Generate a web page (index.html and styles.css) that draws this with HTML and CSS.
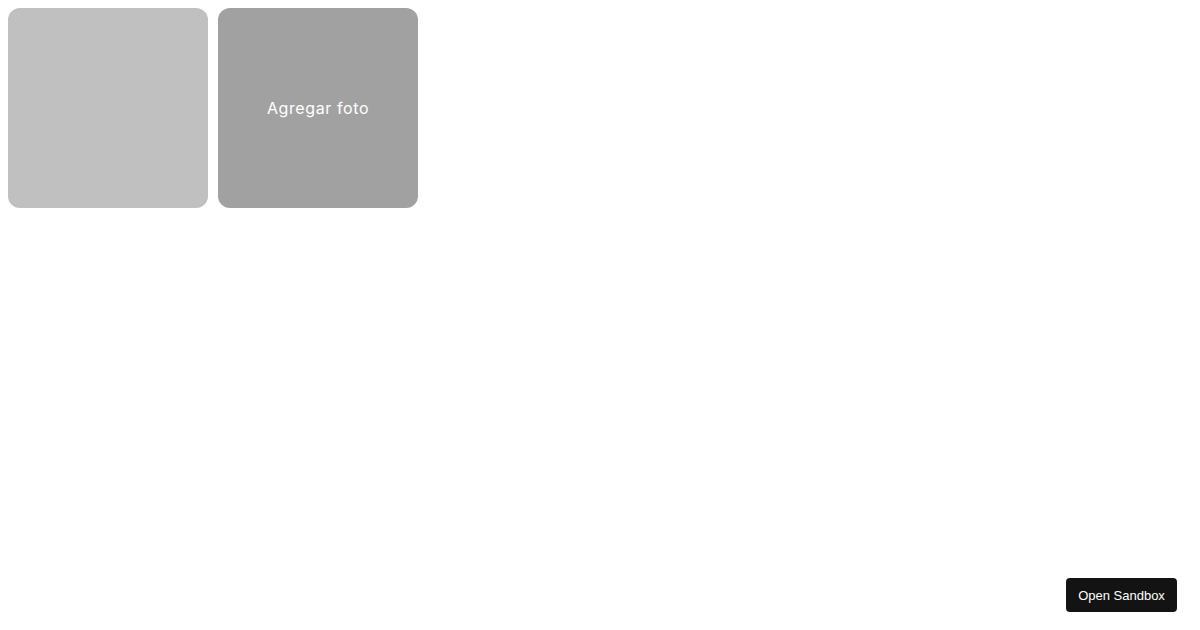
FILE: index.html
```html
<!DOCTYPE html>
<html>
<head>
<meta charset="utf-8">
<link rel="stylesheet" href="styles.css">
</head>
<body>
<div class="grid">
  <div class="tile tile-photo"></div>
  <div class="tile tile-add">Agregar foto</div>
</div>
<a class="sandbox-btn">Open Sandbox</a>
</body>
</html>
```
FILE: styles.css
```css
body {
  margin: 8px;
  background: #fff;
  font-family: "Inter", "Roboto", sans-serif;
}
.grid {
  display: flex;
  gap: 10px;
}
.tile {
  width: 200px;
  height: 200px;
  border-radius: 12px;
  display: flex;
  align-items: center;
  justify-content: center;
  color: #fff;
  font-size: 16px;
  letter-spacing: 0.6px;
}
.tile-photo {
  background: #c0c0c0;
}
.tile-add {
  background: #a1a1a1;
}
.sandbox-btn {
  position: fixed;
  right: 23px;
  bottom: 18px;
  width: 111px;
  height: 34px;
  box-sizing: border-box;
  background: #131313;
  color: #fff;
  border-radius: 4px;
  font-family: "Liberation Sans", Arial, sans-serif;
  font-size: 13px;
  display: flex;
  align-items: center;
  justify-content: center;
}
```
